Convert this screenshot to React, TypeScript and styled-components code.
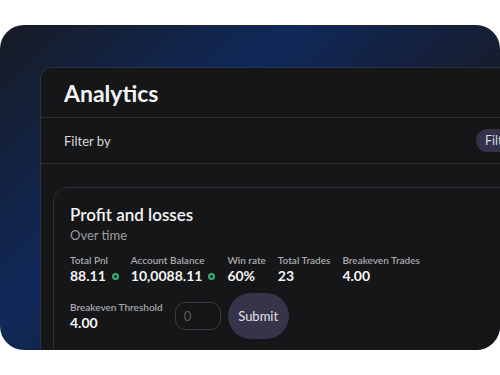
import React from "react";
import styled, { createGlobalStyle } from "styled-components";

const Global = createGlobalStyle`
  html, body {
    margin: 0;
    padding: 0;
    background: #ffffff;
    font-family: Lato, "Noto Sans", sans-serif;
  }
`;

const Backdrop = styled.div`
  margin-top: 25px;
  width: 500px;
  height: 325px;
  border-radius: 24px;
  overflow: hidden;
  background: linear-gradient(135deg, #171b25 0%, #10295a 36%, #142140 52%, #161b25 72%, #171b24 100%);
  padding: 42px 0 0 40px;
  box-sizing: border-box;
`;

const Panel = styled.div`
  width: 512px;
  height: 340px;
  background: #151618;
  border: 1px solid #303136;
  border-radius: 12px;
  box-sizing: border-box;
  color: #f4f4f5;
`;

const Header = styled.div`
  height: 50px;
  display: flex;
  align-items: center;
  padding: 0 23px;
  border-bottom: 1px solid #2c2d31;
  box-sizing: border-box;
`;

const Title = styled.h1`
  margin: 0;
  font-size: 23px;
  font-weight: 700;
`;

const FilterRow = styled.div`
  height: 46px;
  display: flex;
  align-items: center;
  justify-content: space-between;
  padding: 0 23px;
  border-bottom: 1px solid #2c2d31;
  box-sizing: border-box;
  font-size: 13px;
  color: #d8d8da;
`;

const Pill = styled.button`
  height: 23px;
  padding: 0 9px;
  border: none;
  border-radius: 12px;
  background: #34314a;
  color: #d8d8de;
  font-family: inherit;
  font-size: 12.5px;
`;

const Content = styled.div`
  padding: 23px 12px 0;
`;

const Card = styled.div`
  border: 1px solid #2f3035;
  border-radius: 14px;
  padding: 16px 16px 30px;
  height: 200px;
  box-sizing: border-box;
`;

const CardTitle = styled.div`
  font-size: 17px;
  line-height: 22px;
  font-weight: 600;
`;

const Subtitle = styled.div`
  font-size: 13px;
  line-height: 18px;
  color: #9c9ca0;
`;

const Stats = styled.div`
  display: flex;
  gap: 12px;
  margin-top: 10px;
`;

const Stat = styled.div`
  display: flex;
  flex-direction: column;
`;

const Label = styled.span`
  font-size: 10px;
  line-height: 13px;
  color: #a8a8ac;
  font-weight: 600;
`;

const Value = styled.span`
  font-size: 14px;
  line-height: 18px;
  font-weight: 700;
  display: flex;
  align-items: center;
  gap: 6px;
  color: #f4f4f5;
`;

const Dot = styled.span`
  width: 7px;
  height: 7px;
  border-radius: 50%;
  background: radial-gradient(circle, #1a1c1e 1.1px, #2fb36e 1.7px);
`;

const ActionRow = styled.div`
  display: flex;
  align-items: center;
  margin-top: 8px;
`;

const Input = styled.input`
  width: 46px;
  height: 28px;
  margin-left: 12px;
  box-sizing: border-box;
  border: 1px solid #3a3b40;
  border-radius: 10px;
  background: transparent;
  padding: 0 8px;
  color: #eee;
  font-family: inherit;
  font-size: 13px;
  &::placeholder {
    color: #5d5e63;
  }
`;

const Submit = styled.button`
  margin-left: 7px;
  width: 61px;
  height: 46px;
  border: none;
  border-radius: 23px;
  background: #37334a;
  color: #e2e2e6;
  font-family: inherit;
  font-size: 13px;
`;

const stats = [
  { label: "Total Pnl", value: "88.11", dot: true },
  { label: "Account Balance", value: "10,0088.11", dot: true },
  { label: "Win rate", value: "60%" },
  { label: "Total Trades", value: "23" },
  { label: "Breakeven Trades", value: "4.00" },
];

export default function App() {
  return (
    <>
      <Global />
      <Backdrop>
        <Panel>
          <Header>
            <Title>Analytics</Title>
          </Header>
          <FilterRow>
            <span>Filter by</span>
            <Pill>Filters</Pill>
          </FilterRow>
          <Content>
            <Card>
              <CardTitle>Profit and losses</CardTitle>
              <Subtitle>Over time</Subtitle>
              <Stats>
                {stats.map((s) => (
                  <Stat key={s.label}>
                    <Label>{s.label}</Label>
                    <Value>
                      {s.value}
                      {s.dot && <Dot />}
                    </Value>
                  </Stat>
                ))}
              </Stats>
              <ActionRow>
                <Stat>
                  <Label>Breakeven Threshold</Label>
                  <Value>4.00</Value>
                </Stat>
                <Input placeholder="0" />
                <Submit>Submit</Submit>
              </ActionRow>
            </Card>
          </Content>
        </Panel>
      </Backdrop>
    </>
  );
}
